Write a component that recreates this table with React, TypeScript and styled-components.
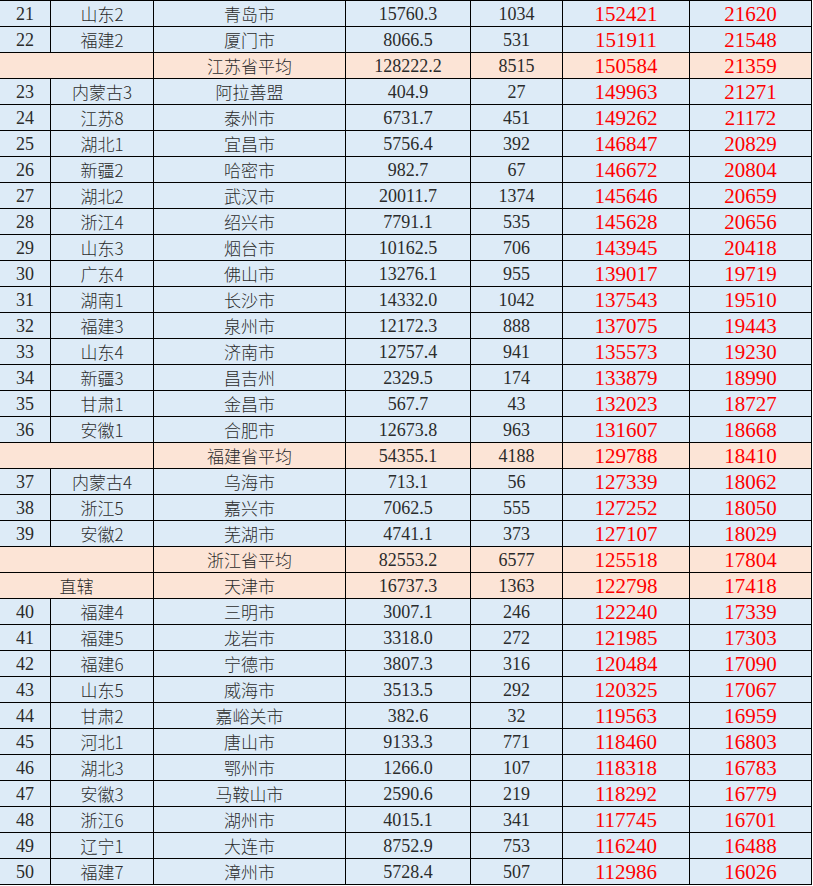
import React from "react";
import styled, { createGlobalStyle } from "styled-components";

type Row = {
  rank?: string;
  prov?: string;
  city: string;
  gdp: string;
  pop: string;
  per: string;
  usd: string;
  kind?: "avg" | "direct";
};

const rows: Row[] = [
  { rank: "21", prov: "山东2", city: "青岛市", gdp: "15760.3", pop: "1034", per: "152421", usd: "21620" },
  { rank: "22", prov: "福建2", city: "厦门市", gdp: "8066.5", pop: "531", per: "151911", usd: "21548" },
  { kind: "avg", city: "江苏省平均", gdp: "128222.2", pop: "8515", per: "150584", usd: "21359" },
  { rank: "23", prov: "内蒙古3", city: "阿拉善盟", gdp: "404.9", pop: "27", per: "149963", usd: "21271" },
  { rank: "24", prov: "江苏8", city: "泰州市", gdp: "6731.7", pop: "451", per: "149262", usd: "21172" },
  { rank: "25", prov: "湖北1", city: "宜昌市", gdp: "5756.4", pop: "392", per: "146847", usd: "20829" },
  { rank: "26", prov: "新疆2", city: "哈密市", gdp: "982.7", pop: "67", per: "146672", usd: "20804" },
  { rank: "27", prov: "湖北2", city: "武汉市", gdp: "20011.7", pop: "1374", per: "145646", usd: "20659" },
  { rank: "28", prov: "浙江4", city: "绍兴市", gdp: "7791.1", pop: "535", per: "145628", usd: "20656" },
  { rank: "29", prov: "山东3", city: "烟台市", gdp: "10162.5", pop: "706", per: "143945", usd: "20418" },
  { rank: "30", prov: "广东4", city: "佛山市", gdp: "13276.1", pop: "955", per: "139017", usd: "19719" },
  { rank: "31", prov: "湖南1", city: "长沙市", gdp: "14332.0", pop: "1042", per: "137543", usd: "19510" },
  { rank: "32", prov: "福建3", city: "泉州市", gdp: "12172.3", pop: "888", per: "137075", usd: "19443" },
  { rank: "33", prov: "山东4", city: "济南市", gdp: "12757.4", pop: "941", per: "135573", usd: "19230" },
  { rank: "34", prov: "新疆3", city: "昌吉州", gdp: "2329.5", pop: "174", per: "133879", usd: "18990" },
  { rank: "35", prov: "甘肃1", city: "金昌市", gdp: "567.7", pop: "43", per: "132023", usd: "18727" },
  { rank: "36", prov: "安徽1", city: "合肥市", gdp: "12673.8", pop: "963", per: "131607", usd: "18668" },
  { kind: "avg", city: "福建省平均", gdp: "54355.1", pop: "4188", per: "129788", usd: "18410" },
  { rank: "37", prov: "内蒙古4", city: "乌海市", gdp: "713.1", pop: "56", per: "127339", usd: "18062" },
  { rank: "38", prov: "浙江5", city: "嘉兴市", gdp: "7062.5", pop: "555", per: "127252", usd: "18050" },
  { rank: "39", prov: "安徽2", city: "芜湖市", gdp: "4741.1", pop: "373", per: "127107", usd: "18029" },
  { kind: "avg", city: "浙江省平均", gdp: "82553.2", pop: "6577", per: "125518", usd: "17804" },
  { kind: "direct", prov: "直辖", city: "天津市", gdp: "16737.3", pop: "1363", per: "122798", usd: "17418" },
  { rank: "40", prov: "福建4", city: "三明市", gdp: "3007.1", pop: "246", per: "122240", usd: "17339" },
  { rank: "41", prov: "福建5", city: "龙岩市", gdp: "3318.0", pop: "272", per: "121985", usd: "17303" },
  { rank: "42", prov: "福建6", city: "宁德市", gdp: "3807.3", pop: "316", per: "120484", usd: "17090" },
  { rank: "43", prov: "山东5", city: "威海市", gdp: "3513.5", pop: "292", per: "120325", usd: "17067" },
  { rank: "44", prov: "甘肃2", city: "嘉峪关市", gdp: "382.6", pop: "32", per: "119563", usd: "16959" },
  { rank: "45", prov: "河北1", city: "唐山市", gdp: "9133.3", pop: "771", per: "118460", usd: "16803" },
  { rank: "46", prov: "湖北3", city: "鄂州市", gdp: "1266.0", pop: "107", per: "118318", usd: "16783" },
  { rank: "47", prov: "安徽3", city: "马鞍山市", gdp: "2590.6", pop: "219", per: "118292", usd: "16779" },
  { rank: "48", prov: "浙江6", city: "湖州市", gdp: "4015.1", pop: "341", per: "117745", usd: "16701" },
  { rank: "49", prov: "辽宁1", city: "大连市", gdp: "8752.9", pop: "753", per: "116240", usd: "16488" },
  { rank: "50", prov: "福建7", city: "漳州市", gdp: "5728.4", pop: "507", per: "112986", usd: "16026" },
];

const widths = [51, 103, 192, 125, 92, 127, 122];

export default function App() {
  return (
    <>
      <GlobalStyle />
      <Sheet>
        <colgroup>
          {widths.map((w, i) => (
            <col key={i} style={{ width: w }} />
          ))}
        </colgroup>
        <tbody>
          {rows.map((r, i) => (
            <Line key={i} $highlight={!!r.kind}>
              {r.kind ? (
                <TextCell colSpan={2}>{r.prov ?? ""}</TextCell>
              ) : (
                <>
                  <NumCell>{r.rank}</NumCell>
                  <TextCell>{r.prov}</TextCell>
                </>
              )}
              <TextCell>{r.city}</TextCell>
              <NumCell>{r.gdp}</NumCell>
              <NumCell>{r.pop}</NumCell>
              <RedCell>{r.per}</RedCell>
              <RedCell>{r.usd}</RedCell>
            </Line>
          ))}
        </tbody>
      </Sheet>
    </>
  );
}

const GlobalStyle = createGlobalStyle`
  html, body {
    margin: 0;
    padding: 0;
    background: #ffffff;
    overflow: hidden;
  }
`;

const Sheet = styled.table`
  border-collapse: collapse;
  table-layout: fixed;
  width: 813px;
  margin-left: -1px;
`;

const Line = styled.tr<{ $highlight: boolean }>`
  height: 26px;
  background-color: ${(p) => (p.$highlight ? "#fce4d6" : "#ddebf7")};
`;

const Cell = styled.td`
  border: 1px solid #000000;
  padding: 0;
  text-align: center;
  vertical-align: middle;
  white-space: nowrap;
  overflow: hidden;
  color: #2b2b2b;
  line-height: 24px;
`;

const NumCell = styled(Cell)`
  font-family: "Liberation Serif", "Noto Sans CJK SC", serif;
  font-size: 18px;
`;

const TextCell = styled(Cell)`
  font-family: "Noto Sans CJK SC", "Liberation Serif", sans-serif;
  font-size: 17px;
  font-weight: 300;
`;

const RedCell = styled(Cell)`
  font-family: "Liberation Serif", serif;
  font-size: 21px;
  color: #ff0000;
`;
